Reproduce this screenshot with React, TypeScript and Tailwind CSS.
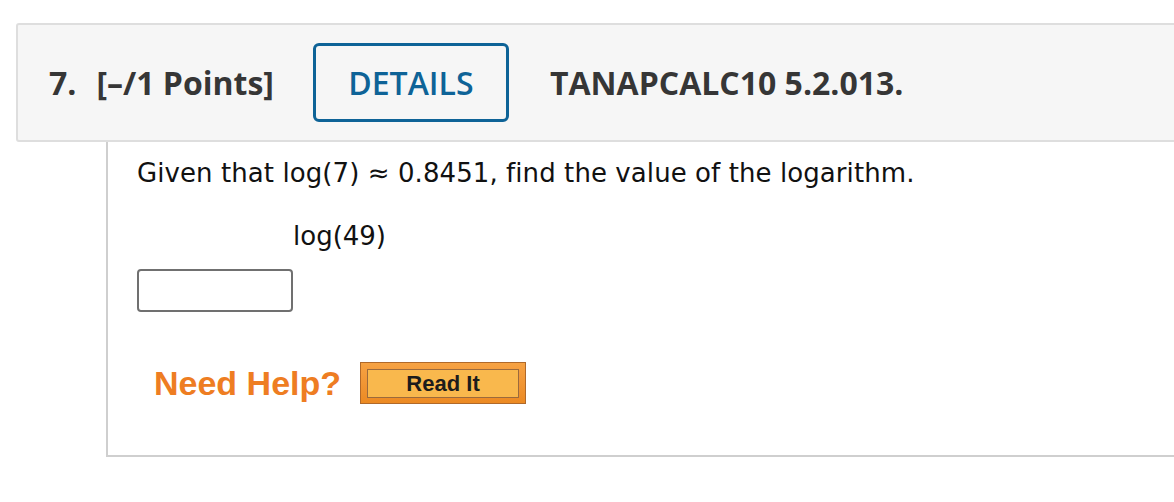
export default function App() {
  return (
    <div className="w-[1174px] h-[502px] bg-white overflow-hidden">
      <div
        className="mt-[23px] ml-4 -mr-2 h-[119px] border-2 border-[#dedede] rounded-[3px] bg-[#f6f6f6] flex items-center pl-[31px] text-[32px] font-bold text-[#363636]"
        style={{ fontFamily: '"Open Sans", sans-serif' }}
      >
        <span>7.</span>
        <span className="ml-[20px]">[–/1 Points]</span>
        <div className="ml-[39px] w-[196px] h-[79px] border-[3px] border-[#0e6397] rounded-[6px] flex items-center justify-center text-[#0e6397] font-semibold">
          DETAILS
        </div>
        <span className="ml-[41px]">TANAPCALC10 5.2.013.</span>
      </div>
      <div
        className="ml-[106px] -mr-2 h-[315px] border-l-2 border-b-2 border-[#cfcfcf] pl-[29px] pt-[16px] flex flex-col items-start text-[26px] leading-[30px] text-[#111111] [font-variant-ligatures:none]"
        style={{ fontFamily: '"DejaVu Sans", Verdana, sans-serif' }}
      >
        <p className="tracking-[0.08px]">Given that log(7) ≈ 0.8451, find the value of the logarithm.</p>
        <p className="mt-[33px] ml-[156px]">log(49)</p>
        <div className="mt-[18px] w-[156px] h-[43px] border-2 border-[#707070] rounded-[4px] bg-white" />
        <div className="mt-[50px] ml-[17px] flex items-center" style={{ fontFamily: '"Liberation Sans", Arial, sans-serif' }}>
          <span className="text-[34px] font-bold text-[#ee7d22] leading-none">Need Help?</span>
          <div className="ml-[19px] w-[166px] h-[42px] border border-[#b0692a] bg-gradient-to-b from-[#f6a243] to-[#ec8a22] p-[6px] pb-[5px]">
            <div className="h-full border border-[#9c6a3c] bg-[#f9b84d] flex items-center justify-center text-[22px] font-bold text-[#1c1c1c] leading-none">
              Read It
            </div>
          </div>
        </div>
      </div>
    </div>
  );
}
